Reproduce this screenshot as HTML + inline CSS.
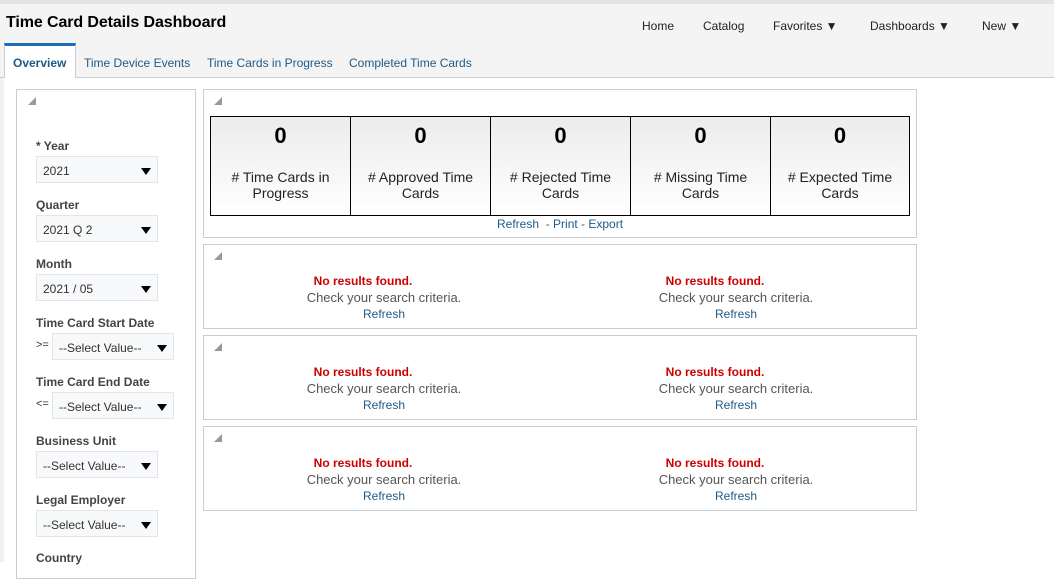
<!DOCTYPE html>
<html><head><style>
*{margin:0;padding:0;box-sizing:border-box}
body{width:1054px;height:562px;overflow:hidden;background:#fff;font-family:"Liberation Sans",Arial,sans-serif;position:relative}
.a{position:absolute}
.hdr{left:0;top:0;width:1054px;height:78px;background:#f4f4f4;border-top:4px solid #e4e4e4;border-bottom:1px solid #c9ced3}
.title{left:6px;top:14px;font-size:16px;font-weight:bold;color:#000;letter-spacing:-0.1px}
.nav{top:19px;font-size:12px;color:#222}
.tab{top:56px;font-size:12px;color:#1f5a87}
.ov{left:4px;top:43px;width:72px;height:35px;background:#fff;border-top:3px solid #1d6eb5;border-left:1px solid #c9ced3;border-right:1px solid #c9ced3}
.panel{border:1px solid #c9ced3;background:#fff}
.tri{width:0;height:0;border-left:8px solid transparent;border-bottom:8px solid #999}
.lbl{left:36px;font-size:12px;font-weight:bold;color:#444}
.sel{width:122px;height:27px;border:1px solid #e2e6ea;background:#f8f9fa;font-size:12px;color:#333;padding:7px 0 0 6px}
.sel:after{content:"";position:absolute;right:6px;top:11px;border-left:5px solid transparent;border-right:5px solid transparent;border-top:7px solid #000}
.kpi{top:116px;width:141px;height:100px;border:1px solid #000;background:linear-gradient(#ececec,#fff);text-align:center}
.kpi b{display:block;font-size:22px;margin-top:6px;color:#000}
.kpi span{display:block;font-size:14px;color:#222;margin-top:20px;line-height:16px}
.nr{width:300px;text-align:center;font-size:13px;line-height:16.5px}
.nr .r{color:#c00;font-weight:bold;font-size:12px;position:relative;left:-21px}
.nr .g{color:#555}
.nr .l{color:#1f5a87;font-size:12px}
</style></head><body>
<div class="a hdr"></div>
<div class="a title">Time Card Details Dashboard</div>
<div class="a nav" style="left:642px">Home</div>
<div class="a nav" style="left:703px">Catalog</div>
<div class="a nav" style="left:773px">Favorites ▼</div>
<div class="a nav" style="left:870px">Dashboards ▼</div>
<div class="a nav" style="left:982px">New ▼</div>
<div class="a ov"></div>
<div class="a tab" style="left:13px;font-weight:bold">Overview</div>
<div class="a tab" style="left:84px">Time Device Events</div>
<div class="a tab" style="left:207px">Time Cards in Progress</div>
<div class="a tab" style="left:349px">Completed Time Cards</div>
<div class="a" style="left:0;top:78px;width:4px;height:484px;background:#f0f0f0"></div>

<div class="a panel" style="left:16px;top:89px;width:180px;height:490px"></div>
<div class="a tri" style="left:28px;top:97px"></div>
<div class="a lbl" style="top:139px">* Year</div>
<div class="a sel" style="left:36px;top:156px">2021</div>
<div class="a lbl" style="top:198px">Quarter</div>
<div class="a sel" style="left:36px;top:215px">2021 Q 2</div>
<div class="a lbl" style="top:257px">Month</div>
<div class="a sel" style="left:36px;top:274px">2021 / 05</div>
<div class="a lbl" style="top:316px">Time Card Start Date</div>
<div class="a" style="left:36px;top:339px;font-size:11px;color:#333">&gt;=</div>
<div class="a sel" style="left:52px;top:333px">--Select Value--</div>
<div class="a lbl" style="top:375px">Time Card End Date</div>
<div class="a" style="left:36px;top:398px;font-size:11px;color:#333">&lt;=</div>
<div class="a sel" style="left:52px;top:392px">--Select Value--</div>
<div class="a lbl" style="top:434px">Business Unit</div>
<div class="a sel" style="left:36px;top:451px">--Select Value--</div>
<div class="a lbl" style="top:493px">Legal Employer</div>
<div class="a sel" style="left:36px;top:510px">--Select Value--</div>
<div class="a lbl" style="top:551px">Country</div>

<div class="a panel" style="left:203px;top:89px;width:714px;height:149px"></div>
<div class="a tri" style="left:214px;top:97px"></div>
<div class="a kpi" style="left:210px"><b>0</b><span># Time Cards in<br>Progress</span></div>
<div class="a kpi" style="left:350px"><b>0</b><span># Approved Time<br>Cards</span></div>
<div class="a kpi" style="left:490px"><b>0</b><span># Rejected Time<br>Cards</span></div>
<div class="a kpi" style="left:630px"><b>0</b><span># Missing Time<br>Cards</span></div>
<div class="a kpi" style="left:770px;width:140px"><b>0</b><span># Expected Time<br>Cards</span></div>
<div class="a" style="left:497px;top:217px;font-size:12px;color:#1f5a87">Refresh <span style="color:#555">&nbsp;-</span> Print <span style="color:#555">-</span> Export</div>

<div class="a panel" style="left:203px;top:244px;width:714px;height:85px"></div>
<div class="a tri" style="left:214px;top:252px"></div>
<div class="a nr" style="left:234px;top:273px"><div class="r">No results found.</div><div class="g">Check your search criteria.</div><div class="l">Refresh</div></div>
<div class="a nr" style="left:586px;top:273px"><div class="r">No results found.</div><div class="g">Check your search criteria.</div><div class="l">Refresh</div></div>

<div class="a panel" style="left:203px;top:335px;width:714px;height:85px"></div>
<div class="a tri" style="left:214px;top:343px"></div>
<div class="a nr" style="left:234px;top:364px"><div class="r">No results found.</div><div class="g">Check your search criteria.</div><div class="l">Refresh</div></div>
<div class="a nr" style="left:586px;top:364px"><div class="r">No results found.</div><div class="g">Check your search criteria.</div><div class="l">Refresh</div></div>

<div class="a panel" style="left:203px;top:426px;width:714px;height:85px"></div>
<div class="a tri" style="left:214px;top:434px"></div>
<div class="a nr" style="left:234px;top:455px"><div class="r">No results found.</div><div class="g">Check your search criteria.</div><div class="l">Refresh</div></div>
<div class="a nr" style="left:586px;top:455px"><div class="r">No results found.</div><div class="g">Check your search criteria.</div><div class="l">Refresh</div></div>
</body></html>
